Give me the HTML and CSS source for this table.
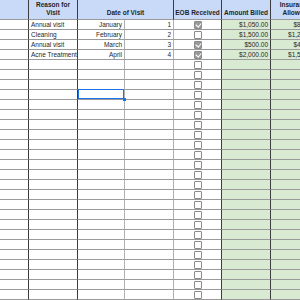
FILE: index.html
```html
<!DOCTYPE html>
<html>
<head>
<meta charset="utf-8">
<link rel="stylesheet" href="styles.css">
</head>
<body>
<div class="sheet">
  <div class="row head">
    <div class="c c0 dk"></div>
    <div class="c c1 dk"><span>Reason for<br>Visit</span></div>
    <div class="c cdate dk"><span>Date of Visit</span></div>
    <div class="c c4"><span>EOB Received</span></div>
    <div class="c c5 dk"><span>Amount Billed</span></div>
    <div class="c c6 dk"><span>Insurance<br>Allowed</span></div>
  </div>

  <div class="row"><div class="c dk"></div><div class="c dk t">Annual visit</div><div class="c lt r">January</div><div class="c lt r">1</div><div class="c eob"><i class="cb on"></i></div><div class="c g dk r">$1,050.00</div><div class="c g dk r">$840.00</div></div>
  <div class="row"><div class="c dk"></div><div class="c dk t">Cleaning</div><div class="c lt r">February</div><div class="c lt r">2</div><div class="c eob"><i class="cb"></i></div><div class="c g dk r">$1,500.00</div><div class="c g dk r">$1,200.00</div></div>
  <div class="row"><div class="c dk"></div><div class="c dk t">Annual visit</div><div class="c lt r">March</div><div class="c lt r">3</div><div class="c eob"><i class="cb on"></i></div><div class="c g dk r">$500.00</div><div class="c g dk r">$400.00</div></div>
  <div class="row"><div class="c dk"></div><div class="c dk t">Acne Treatment</div><div class="c lt r">April</div><div class="c lt r">4</div><div class="c eob"><i class="cb on"></i></div><div class="c g dk r">$2,000.00</div><div class="c g dk r">$1,500.00</div></div>

  <div class="row"><div class="c dk"></div><div class="c dk"></div><div class="c lt"></div><div class="c lt"></div><div class="c eob"><i class="cb"></i></div><div class="c g dk"></div><div class="c g dk"></div></div>
  <div class="row"><div class="c dk"></div><div class="c dk"></div><div class="c lt"></div><div class="c lt"></div><div class="c eob"><i class="cb"></i></div><div class="c g dk"></div><div class="c g dk"></div></div>
  <div class="row"><div class="c dk"></div><div class="c dk"></div><div class="c lt"></div><div class="c lt"></div><div class="c eob"><i class="cb"></i></div><div class="c g dk"></div><div class="c g dk"></div></div>
  <div class="row"><div class="c dk"></div><div class="c dk"></div><div class="c lt sel"></div><div class="c lt"></div><div class="c eob"><i class="cb"></i></div><div class="c g dk"></div><div class="c g dk"></div></div>
  <div class="row"><div class="c dk"></div><div class="c dk"></div><div class="c lt"></div><div class="c lt"></div><div class="c eob"><i class="cb"></i></div><div class="c g dk"></div><div class="c g dk"></div></div>
  <div class="row"><div class="c dk"></div><div class="c dk"></div><div class="c lt"></div><div class="c lt"></div><div class="c eob"><i class="cb"></i></div><div class="c g dk"></div><div class="c g dk"></div></div>
  <div class="row"><div class="c dk"></div><div class="c dk"></div><div class="c lt"></div><div class="c lt"></div><div class="c eob"><i class="cb"></i></div><div class="c g dk"></div><div class="c g dk"></div></div>
  <div class="row"><div class="c dk"></div><div class="c dk"></div><div class="c lt"></div><div class="c lt"></div><div class="c eob"><i class="cb"></i></div><div class="c g dk"></div><div class="c g dk"></div></div>
  <div class="row"><div class="c dk"></div><div class="c dk"></div><div class="c lt"></div><div class="c lt"></div><div class="c eob"><i class="cb"></i></div><div class="c g dk"></div><div class="c g dk"></div></div>
  <div class="row"><div class="c dk"></div><div class="c dk"></div><div class="c lt"></div><div class="c lt"></div><div class="c eob"><i class="cb"></i></div><div class="c g dk"></div><div class="c g dk"></div></div>
  <div class="row"><div class="c dk"></div><div class="c dk"></div><div class="c lt"></div><div class="c lt"></div><div class="c eob"><i class="cb"></i></div><div class="c g dk"></div><div class="c g dk"></div></div>
  <div class="row"><div class="c dk"></div><div class="c dk"></div><div class="c lt"></div><div class="c lt"></div><div class="c eob"><i class="cb"></i></div><div class="c g dk"></div><div class="c g dk"></div></div>
  <div class="row"><div class="c dk"></div><div class="c dk"></div><div class="c lt"></div><div class="c lt"></div><div class="c eob"><i class="cb"></i></div><div class="c g dk"></div><div class="c g dk"></div></div>
  <div class="row"><div class="c dk"></div><div class="c dk"></div><div class="c lt"></div><div class="c lt"></div><div class="c eob"><i class="cb"></i></div><div class="c g dk"></div><div class="c g dk"></div></div>
  <div class="row"><div class="c dk"></div><div class="c dk"></div><div class="c lt"></div><div class="c lt"></div><div class="c eob"><i class="cb"></i></div><div class="c g dk"></div><div class="c g dk"></div></div>
  <div class="row"><div class="c dk"></div><div class="c dk"></div><div class="c lt"></div><div class="c lt"></div><div class="c eob"><i class="cb"></i></div><div class="c g dk"></div><div class="c g dk"></div></div>
  <div class="row"><div class="c dk"></div><div class="c dk"></div><div class="c lt"></div><div class="c lt"></div><div class="c eob"><i class="cb"></i></div><div class="c g dk"></div><div class="c g dk"></div></div>
  <div class="row"><div class="c dk"></div><div class="c dk"></div><div class="c lt"></div><div class="c lt"></div><div class="c eob"><i class="cb"></i></div><div class="c g dk"></div><div class="c g dk"></div></div>
  <div class="row"><div class="c dk"></div><div class="c dk"></div><div class="c lt"></div><div class="c lt"></div><div class="c eob"><i class="cb"></i></div><div class="c g dk"></div><div class="c g dk"></div></div>
  <div class="row"><div class="c dk"></div><div class="c dk"></div><div class="c lt"></div><div class="c lt"></div><div class="c eob"><i class="cb"></i></div><div class="c g dk"></div><div class="c g dk"></div></div>
  <div class="row"><div class="c dk"></div><div class="c dk"></div><div class="c lt"></div><div class="c lt"></div><div class="c eob"><i class="cb"></i></div><div class="c g dk"></div><div class="c g dk"></div></div>
  <div class="row"><div class="c dk"></div><div class="c dk"></div><div class="c lt"></div><div class="c lt"></div><div class="c eob"><i class="cb"></i></div><div class="c g dk"></div><div class="c g dk"></div></div>
  <div class="row"><div class="c dk"></div><div class="c dk"></div><div class="c lt"></div><div class="c lt"></div><div class="c eob"><i class="cb"></i></div><div class="c g dk"></div><div class="c g dk"></div></div>
  <div class="row"><div class="c dk"></div><div class="c dk"></div><div class="c lt"></div><div class="c lt"></div><div class="c eob"><i class="cb"></i></div><div class="c g dk"></div><div class="c g dk"></div></div>
</div>
</body>
</html>
```

FILE: styles.css
```css
html, body {
  margin: 0;
  padding: 0;
  background: #ffffff;
  overflow: hidden;
}

.sheet {
  width: 320px;
  font-family: "Liberation Sans", Arial, sans-serif;
  font-size: 6.5px;
  color: #262626;
}

.row {
  display: grid;
  grid-template-columns: 29px 49px 47px 49px 48px 49px 49px;
  height: 10px;
}

.row.head {
  height: 20px;
  grid-template-columns: 29px 49px 96px 48px 49px 49px;
  background: #c9daf8;
  font-weight: bold;
  color: #1f1f1f;
}

.c {
  box-sizing: border-box;
  border-bottom: 1px solid #9a9a9a;
  border-right: 1px solid #b0b0b0;
  position: relative;
  line-height: 9px;
  white-space: nowrap;
  overflow: hidden;
}

.c.dk { border-right-color: #3c3c3c; }
.c.lt { border-right-color: #b0b0b0; }

.head .c {
  display: flex;
  align-items: flex-end;
  justify-content: center;
  text-align: center;
  line-height: 8px;
  padding-bottom: 2px;
}

.head .c4 { border-right-color: #3c3c3c; }
.head .cdate { border-right-color: #3c3c3c; }

.t { padding-left: 2px; }
.r { text-align: right; padding-right: 2px; }

.g { background: #d9ead3; }

.eob {
  display: flex;
  justify-content: center;
  align-items: flex-start;
  padding-top: 1px;
  border-right-color: #3c3c3c;
}

.cb {
  display: block;
  box-sizing: border-box;
  width: 8px;
  height: 8px;
  border: 1px solid #8a8a8a;
  border-radius: 1px;
  background: #ffffff;
  position: relative;
}

.cb.on {
  background: #9a9a9a;
  border-color: #8a8a8a;
}

.cb.on::after {
  content: "";
  position: absolute;
  left: 1px;
  top: 0px;
  width: 3px;
  height: 4px;
  border-right: 1px solid #ffffff;
  border-bottom: 1px solid #ffffff;
  transform: translate(0.5px, 0) rotate(40deg);
}

.sel::after {
  content: "";
  position: absolute;
  inset: -1px 0 0 0;
  border: 1px solid #1a73e8;
  pointer-events: none;
}

.sel {
  overflow: visible;
}

.sel::before {
  content: "";
  position: absolute;
  right: -2px;
  bottom: -2px;
  width: 3px;
  height: 3px;
  background: #1a73e8;
  z-index: 2;
}
```
